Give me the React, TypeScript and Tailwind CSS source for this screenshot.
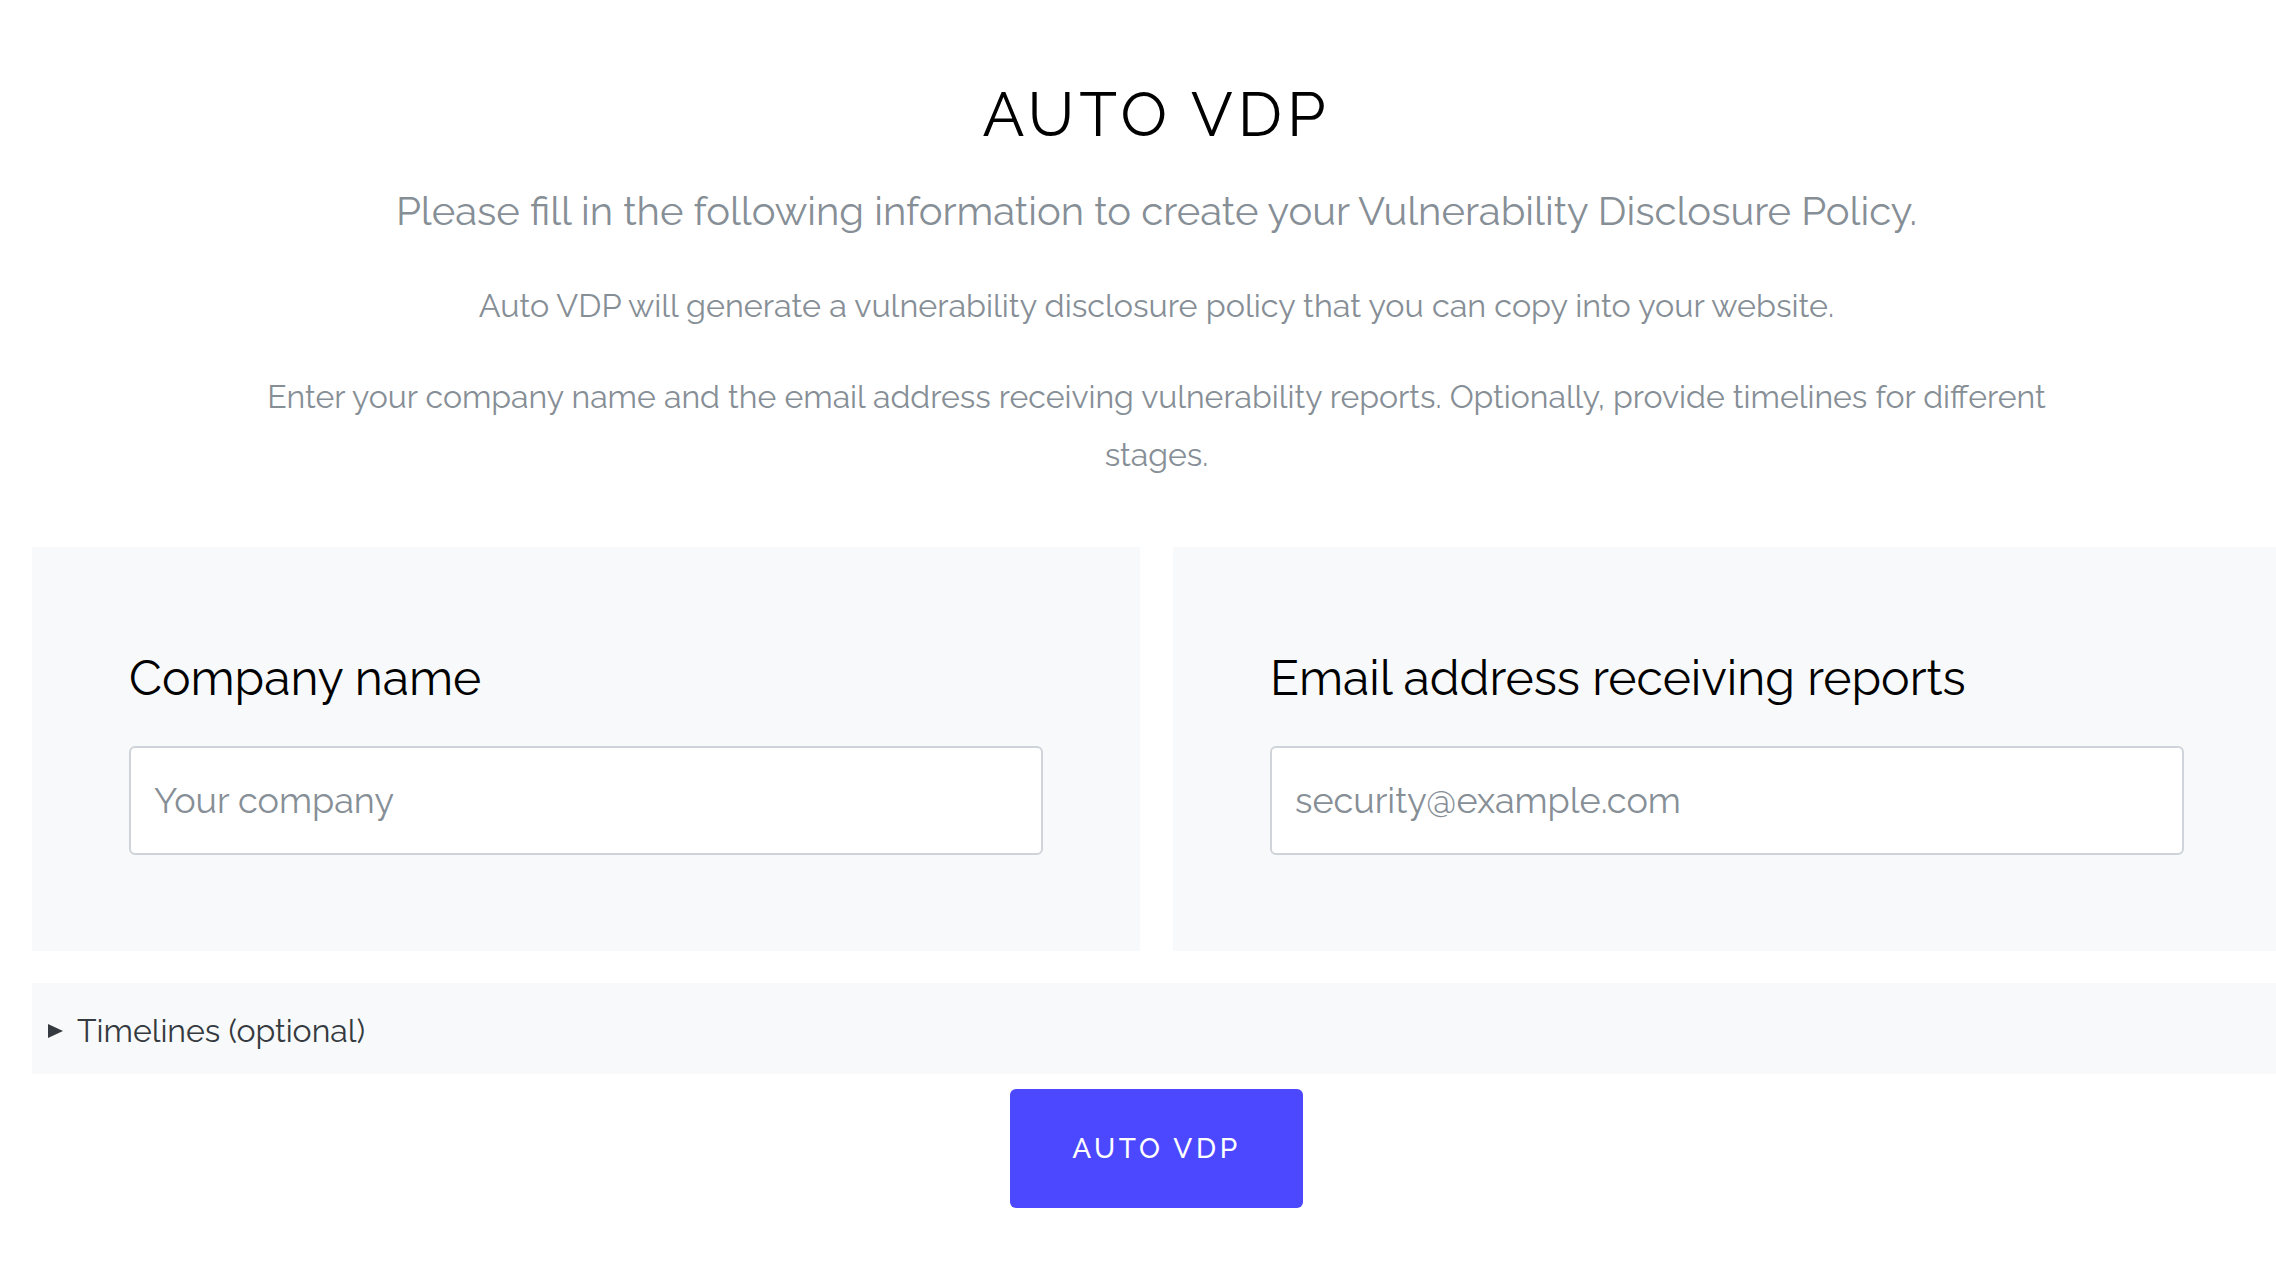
import { useState } from "react";

const font = { fontFamily: "Raleway, Lato, 'Open Sans', sans-serif" };

export default function App() {
  const [company, setCompany] = useState("");
  const [email, setEmail] = useState("");

  return (
    <div className="w-full min-h-[1280px] overflow-hidden bg-white" style={font}>
      <div className="ml-[32px] w-[2249px] pt-[78px]">
        <h1 className="text-center text-[62px] leading-[1.2] font-normal tracking-[0.08em] text-black">
          AUTO VDP
        </h1>
        <p className="mt-[35px] text-center text-[40px] leading-[1.2] text-[#868e96]">
          Please fill in the following information to create your Vulnerability Disclosure Policy.
        </p>
        <p className="mt-[42px] text-center text-[32.3px] leading-[58px] text-[#868e96]">
          Auto VDP will generate a vulnerability disclosure policy that you can copy into your website.
        </p>
        <p className="mx-auto mt-[33px] max-w-[1850px] text-center text-[32px] leading-[58px] text-[#868e96]">
          Enter your company name and the email address receiving vulnerability reports. Optionally,
          provide timelines for different stages.
        </p>

        <div className="mt-[63px] grid grid-cols-2 gap-[33px]">
          <div className="bg-[#f8f9fa] px-[97px] pt-[103px] pb-[96px]">
            <label className="block text-[48px] leading-[1.2] text-black">Company name</label>
            <input
              value={company}
              onChange={(e) => setCompany(e.target.value)}
              placeholder="Your company"
              className="mt-[38px] block h-[109px] w-full rounded-[6px] border-2 border-[#ced4da] bg-white px-[23px] text-[36px] text-black placeholder:text-[#868e96] outline-none"
            />
          </div>
          <div className="bg-[#f8f9fa] px-[97px] pt-[103px] pb-[96px]">
            <label className="block text-[48px] leading-[1.2] text-black">
              Email address receiving reports
            </label>
            <input
              value={email}
              onChange={(e) => setEmail(e.target.value)}
              placeholder="security@example.com"
              className="mt-[38px] block h-[109px] w-full rounded-[6px] border-2 border-[#ced4da] bg-white px-[23px] text-[36px] text-black placeholder:text-[#868e96] outline-none"
            />
          </div>
        </div>

        <details className="mt-[32px] bg-[#f8f9fa]">
          <summary className="flex h-[91px] cursor-pointer list-none items-center pl-[16px] pt-[5px] text-[32px] text-[#343a40] [&::-webkit-details-marker]:hidden">
            <svg width="15" height="14" viewBox="0 0 15 14" className="mr-[14px] shrink-0">
              <path d="M0 0 L15 7 L0 14 Z" fill="#343a40" />
            </svg>
            <span>Timelines (optional)</span>
          </summary>
        </details>

        <div className="mt-[15px] flex justify-center">
          <button className="h-[119px] w-[293px] rounded-[6px] bg-[#4b48ff] pt-[1px] text-[28px] font-medium tracking-[0.13em] text-white">
            AUTO VDP
          </button>
        </div>
      </div>
    </div>
  );
}
